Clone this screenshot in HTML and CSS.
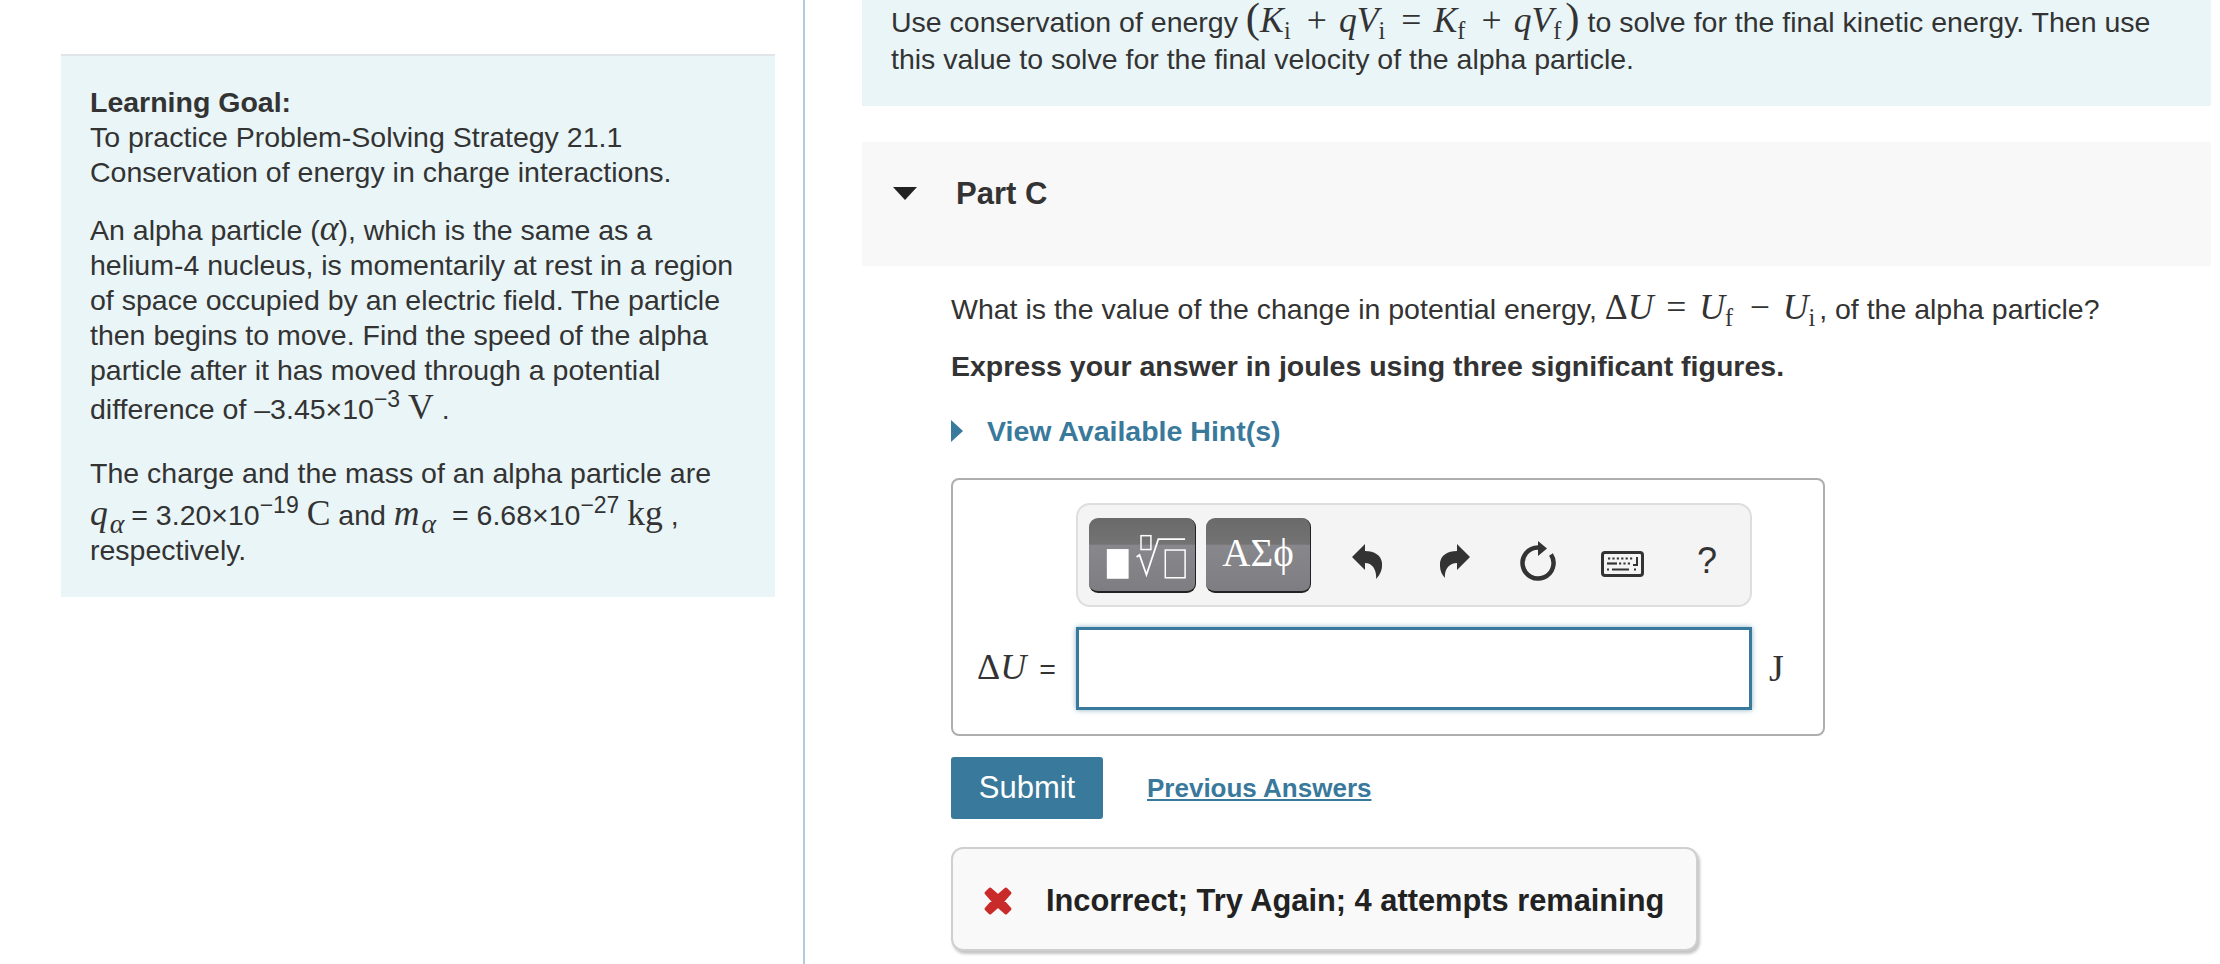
FILE: index.html
```html
<!DOCTYPE html>
<html lang="en">
<head>
    <meta charset="UTF-8">
    <meta name="viewport" content="width=device-width, initial-scale=1.0">
    <title>Part C</title>
    <link rel="stylesheet" href="styles.css">
</head>
<body>
    <div class="sidebar">
        <div class="goal">
            <p><b>Learning Goal:</b><br>To practice Problem-Solving Strategy 21.1 Conservation of energy in charge interactions.</p>
            <p class="para-two">An alpha particle (<span class="mi">α</span>), which is the same as a <span class="nowrap">helium-4</span> nucleus, is momentarily at rest in a region of space occupied by an electric field. The particle then begins to move. Find the speed of the alpha particle after it has moved through a potential difference of <span class="nowrap">–3.45×10<sup>−3</sup></span> <span class="m">V</span> .</p>
            <p class="para-three">The charge and the mass of an alpha particle are <span class="mi charge">q<sub>α</sub></span> = 3.20×10<sup>−19</sup> <span class="m">C</span> and <span class="mi mass">m<sub>α</sub></span> = 6.68×10<sup>−27</sup> <span class="m">kg</span> , respectively.</p>
        </div>
    </div>

    <div class="main">
        <div class="tip">
            <p>Use conservation of energy <span class="paren">(</span><span class="mi">K</span><sub class="m">i</sub><span class="m op">+</span><span class="mi">qV</span><sub class="m">i</sub><span class="m op">=</span><span class="mi">K</span><sub class="m">f</sub><span class="m op">+</span><span class="mi">qV</span><sub class="m">f</sub><span class="paren">)</span> to solve for the final kinetic energy. Then use this value to solve for the final velocity of the alpha particle.</p>
        </div>

        <div class="part-head">
            <span class="part-arrow"></span>
            <b>Part C</b>
        </div>

        <div class="part-body">
            <p class="question">What is the value of the change in potential energy, <span class="m">Δ</span><span class="mi">U</span><span class="m op">=</span><span class="mi">U</span><sub class="m">f</sub><span class="m op">−</span><span class="mi">U</span><sub class="m">i</sub>, of the alpha particle?</p>
            <p class="express"><b>Express your answer in joules using three significant figures.</b></p>
            <div class="hint-row">
                <span class="hint-arrow"></span>
                <a class="hint-link">View Available Hint(s)</a>
            </div>

            <div class="answer-box">
                <div class="toolbar">
                    <div class="tool-btn tool-root">
                        <svg width="107" height="73" viewBox="0 0 107 73">
                            <rect x="18" y="31" width="22" height="30" fill="#fff"/>
                            <rect x="52.500" y="17.500" width="10" height="14" fill="none" stroke="#fff" stroke-width="1.500"/>
                            <path d="M48 39 L51 37 L58 57 L70 21 H97" fill="none" stroke="#fff" stroke-width="1.800"/>
                            <rect x="77" y="32" width="20" height="28" fill="none" stroke="#fff" stroke-width="1.500"/>
                        </svg>
                    </div>
                    <div class="tool-btn tool-greek">ΑΣϕ</div>
                    <svg class="icon icon-undo" width="30" height="36" viewBox="0 0 30 36">
                        <path d="M0 14 L13 1 V8 C24 8 31 14 30 23 C30 28 27 33 24 36 C25 28 21 20 13 20 V27 Z" fill="#333"/>
                    </svg>
                    <svg class="icon icon-redo" width="30" height="36" viewBox="0 0 30 36">
                        <path d="M30 14 L17 1 V8 C6 8 -1 14 0 23 C0 28 2 32 5 35 C4 27 9 20 17 20 V27 Z" fill="#333"/>
                    </svg>
                    <svg class="icon icon-reset" width="36" height="40" viewBox="0 0 36 40">
                        <path d="M18 6.500 A15.500 15.500 0 1 0 31 13.500" fill="none" stroke="#333" stroke-width="4.500"/>
                        <path d="M18 0 L27 7.500 L18 15 Z" fill="#333"/>
                    </svg>
                    <svg class="icon icon-keys" width="43" height="26" viewBox="0 0 43 26">
                        <rect x="1.500" y="1.500" width="40" height="23" rx="2.500" fill="#f4f4f4" stroke="#333" stroke-width="3"/>
                        <path d="M7 7.500 H33" stroke="#333" stroke-width="2.200" stroke-dasharray="2.200 2.200"/>
                        <path d="M6 12.500 H16" stroke="#333" stroke-width="2.200"/>
                        <path d="M18 12.500 H31" stroke="#333" stroke-width="2.200" stroke-dasharray="2.200 2.200"/>
                        <path d="M36 6 V14 H32" fill="none" stroke="#333" stroke-width="2"/>
                        <path d="M6 18.500 H8 M11 18.500 H28 M33 18.500 H35" stroke="#333" stroke-width="2.200"/>
                    </svg>
                    <span class="tool-help">?</span>
                </div>
                <div class="input-row">
                    <span class="input-label"><span class="m">Δ</span><span class="mi">U</span><span class="label-eq">=</span></span>
                    <div class="answer-input"></div>
                    <span class="input-unit m">J</span>
                </div>
            </div>

            <div class="submit-row">
                <button class="submit-btn">Submit</button>
                <a class="prev-link">Previous Answers</a>
            </div>

            <div class="feedback">
                <svg width="30" height="30" viewBox="0 0 30 30">
                    <path d="M7 3 L15 10 L23 3 L27 7 L20 15 L27 23 L23 27 L15 20 L7 27 L3 23 L10 15 L3 7 Z" fill="#c92b2b" stroke="#c92b2b" stroke-width="3" stroke-linejoin="round"/>
                </svg>
                <b>Incorrect; Try Again; 4 attempts remaining</b>
            </div>
        </div>
    </div>
</body>
</html>
```

FILE: styles.css
```css
html, body {
    margin: 0;
    height: 964px;
    overflow: hidden;
}
body {
    display: flex;
    background: #fff;
    color: #333;
    font-family: "Liberation Sans", Arial, sans-serif;
    font-size: 28.5px;
    line-height: 35px;
}
p {
    margin: 0;
}
sup {
    font-size: 23px;
    line-height: 28px;
    vertical-align: 12px;
}
sub {
    font-size: 0.72em;
    line-height: 0;
}
.nowrap {
    white-space: nowrap;
}
.m {
    font-family: "Liberation Serif", serif;
    font-size: 1.25em;
}
.mi {
    font-family: "Liberation Serif", serif;
    font-style: italic;
    font-size: 1.25em;
}
.mi sub {
    font-size: 0.78em;
    padding: 0 2px;
}
.charge {
    margin-right: -3px;
}
.mass {
    margin-right: 6px;
}
sub.m {
    font-size: 0.85em;
    padding-right: 4px;
}
.op {
    margin: 0 0.36em;
}
.tip .op {
    margin: 0 0.34em;
}
.paren {
    font-family: "Liberation Serif", serif;
    font-size: 1.5em;
    line-height: 0;
}

/* left column */
.sidebar {
    width: 803px;
    flex: none;
    border-right: 2px solid #b4c9dc;
}
.goal {
    margin: 54px 0 0 61px;
    width: 714px;
    height: 543px;
    box-sizing: border-box;
    padding: 29px 29px 0;
    background: #e9f5f7;
    border-top: 2px solid #dfe5e8;
}
.para-two {
    margin-top: 21px;
}
.para-two sup {
    line-height: 22px;
}
.para-three {
    margin-top: 29px;
}

/* right column */
.main {
    flex: 1;
    margin: 0 9px 0 57px;
}
.tip {
    height: 106px;
    box-sizing: border-box;
    padding: 2px 29px 0;
    background: #e9f5f7;
    line-height: 37px;
}
.part-head {
    display: flex;
    align-items: center;
    margin-top: 36px;
    height: 124px;
    box-sizing: border-box;
    padding: 0 0 21px 31px;
    background: #f8f8f8;
    font-size: 31px;
}
.part-arrow {
    width: 0;
    height: 0;
    margin-right: 39px;
    border-left: 12px solid transparent;
    border-right: 12px solid transparent;
    border-top: 13px solid #222;
}
.part-body {
    padding: 23px 0 0 89px;
}
.question {
    line-height: 36px;
}
.express {
    margin-top: 22px;
}
.hint-row {
    display: flex;
    align-items: center;
    margin-top: 29px;
    height: 36px;
}
.hint-arrow {
    width: 0;
    height: 0;
    margin-right: 24px;
    border-top: 11px solid transparent;
    border-bottom: 11px solid transparent;
    border-left: 12px solid #39799b;
}
.hint-link {
    color: #39799b;
    font-weight: 700;
    font-size: 28.5px;
}

/* answer box */
.answer-box {
    width: 874px;
    height: 258px;
    box-sizing: border-box;
    margin-top: 29px;
    padding: 23px 0 0 24px;
    border: 2px solid #aeaeae;
    border-radius: 8px;
}
.toolbar {
    display: flex;
    align-items: center;
    width: 676px;
    height: 104px;
    box-sizing: border-box;
    margin-left: 99px;
    padding-left: 11px;
    background: #f4f4f4;
    border: 2px solid #dedede;
    border-radius: 14px;
}
.tool-btn {
    display: flex;
    align-items: center;
    justify-content: center;
    height: 75px;
    box-sizing: border-box;
    border-radius: 9px;
    border-bottom: 2px solid #222;
    border-right: 1px solid #222;
    background: linear-gradient(#6a6a6a 0, #737373 36%, #87878c 37%, #7d7d82 100%);
    color: #fff;
}
.tool-root {
    width: 107px;
}
.tool-greek {
    width: 105px;
    margin-left: 10px;
    padding-bottom: 3px;
    font-family: "Liberation Serif", serif;
    font-size: 39px;
}
.icon {
    flex: none;
}
.icon-undo {
    margin: 11px 0 0 41px;
}
.icon-redo {
    margin: 11px 0 0 58px;
}
.icon-reset {
    margin: 11px 0 0 50px;
}
.icon-keys {
    margin: 17px 0 0 45px;
}
.tool-help {
    margin: 11px 0 0 53px;
    font-size: 36px;
}
.input-row {
    display: flex;
    align-items: center;
    margin-top: 20px;
}
.input-label {
    width: 99px;
}
.input-label .m, .input-label .mi {
    font-size: 36px;
}
.label-eq {
    margin-left: 13px;
}
.answer-input {
    width: 676px;
    height: 83px;
    box-sizing: border-box;
    background: #fff;
    border: 3px solid #39799b;
    box-shadow: 0 0 5px rgba(57, 121, 155, 0.6);
}
.input-unit {
    margin-left: 17px;
    font-size: 38px;
}

/* submit and feedback */
.submit-row {
    display: flex;
    align-items: center;
    margin-top: 21px;
}
.submit-btn {
    width: 152px;
    height: 62px;
    padding: 0;
    border: none;
    border-radius: 3px;
    background: #39799b;
    color: #fff;
    font-family: inherit;
    font-size: 31px;
}
.prev-link {
    margin-left: 44px;
    color: #39799b;
    font-size: 26px;
    font-weight: 700;
    text-decoration: underline;
}
.feedback {
    display: flex;
    align-items: center;
    gap: 33px;
    width: 747px;
    height: 104px;
    box-sizing: border-box;
    margin-top: 28px;
    padding: 3px 0 0 30px;
    background: #f9f9f9;
    border: 2px solid #cfcfcf;
    border-radius: 12px;
    box-shadow: 2px 3px 3px #c4c4c4;
    color: #222;
    font-size: 30.8px;
}
```
